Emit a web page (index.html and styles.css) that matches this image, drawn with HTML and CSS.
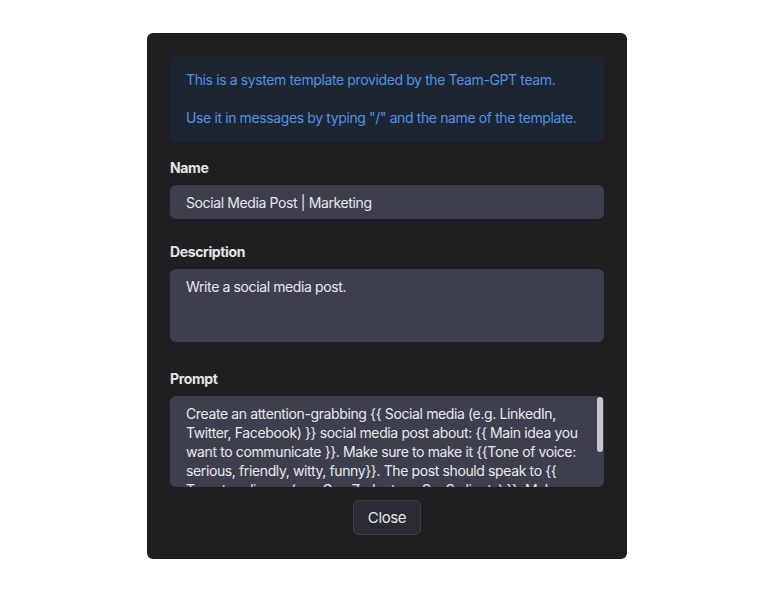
FILE: index.html
```html
<!DOCTYPE html>
<html lang="en">
<head>
<meta charset="utf-8">
<title>Template</title>
<link rel="stylesheet" href="styles.css">
</head>
<body>
<div class="modal">
  <div class="info">
    <p>This is a system template provided by the Team-GPT team.</p>
    <p class="gap">Use it in messages by typing "/" and the name of the template.</p>
  </div>

  <div class="label label-first">Name</div>
  <div class="field field-input">Social Media Post | Marketing</div>

  <div class="label label-desc">Description</div>
  <div class="field field-desc">Write a social media post.</div>

  <div class="label label-prompt">Prompt</div>
  <div class="prompt-wrap">
    <div class="field field-prompt">Create an attention-grabbing {{ Social media (e.g. LinkedIn, Twitter, Facebook) }} social media post about: {{ Main idea you want to communicate }}. Make sure to make it {{Tone of voice: serious, friendly, witty, funny}}. The post should speak to {{ Target audience (e.g. Gen Z, doctors, SaaS clients) }}. Make sure to include a call to action and relevant hashtags. Keep it short and engaging.</div>
    <div class="thumb"></div>
  </div>

  <div class="actions">
    <button class="btn" type="button">Close</button>
  </div>
</div>
</body>
</html>
```

FILE: styles.css
```css
html, body {
  margin: 0;
  padding: 0;
  background: #ffffff;
}

body {
  font-family: Inter, "Noto Sans", "Liberation Sans", sans-serif;
  letter-spacing: -0.38px;
  padding-top: 33px;
}

.modal {
  margin-left: 147px;
  width: 480px;
  box-sizing: border-box;
  padding: 23px 23px 24px;
  background: #1f1f22;
  border-radius: 6px;
}

.info {
  background: #1d2533;
  border-radius: 6px;
  padding: 14px 16px 15px;
  color: #4f92e2;
  font-size: 14px;
  line-height: 19px;
}

.info p {
  margin: 0;
  white-space: nowrap;
}

.info .gap {
  margin-top: 19px;
}

.label {
  color: #e4e4e7;
  font-size: 14px;
  font-weight: 700;
  line-height: 19px;
  margin-bottom: 8px;
}

.label-first { margin-top: 16px; }
.label-desc { margin-top: 23px; }
.label-prompt { margin-top: 27px; }

.field {
  background: #3e3f4e;
  border-radius: 6px;
  color: #e8e8ea;
  font-size: 14px;
  line-height: 19px;
  padding: 8px 16px;
  box-sizing: border-box;
}

.field-input {
  height: 34px;
  padding-top: 7.5px;
}

.field-desc {
  height: 73px;
}

.prompt-wrap {
  position: relative;
}

.field-prompt {
  height: 91px;
  overflow: hidden;
  padding-right: 16px;
}

.thumb {
  position: absolute;
  top: 1px;
  right: 1px;
  width: 6px;
  height: 55px;
  border-radius: 3px;
  background: #c8c8ca;
}

.actions {
  display: flex;
  justify-content: center;
  margin-top: 13px;
}

.btn {
  width: 68px;
  height: 35px;
  background: #2a2b33;
  border: 1px solid #3c3d47;
  border-radius: 5px;
  color: #e6e6e8;
  font-family: Inter, "Noto Sans", "Liberation Sans", sans-serif;
  font-size: 15px;
  letter-spacing: -0.38px;
  padding: 0;
}
```
